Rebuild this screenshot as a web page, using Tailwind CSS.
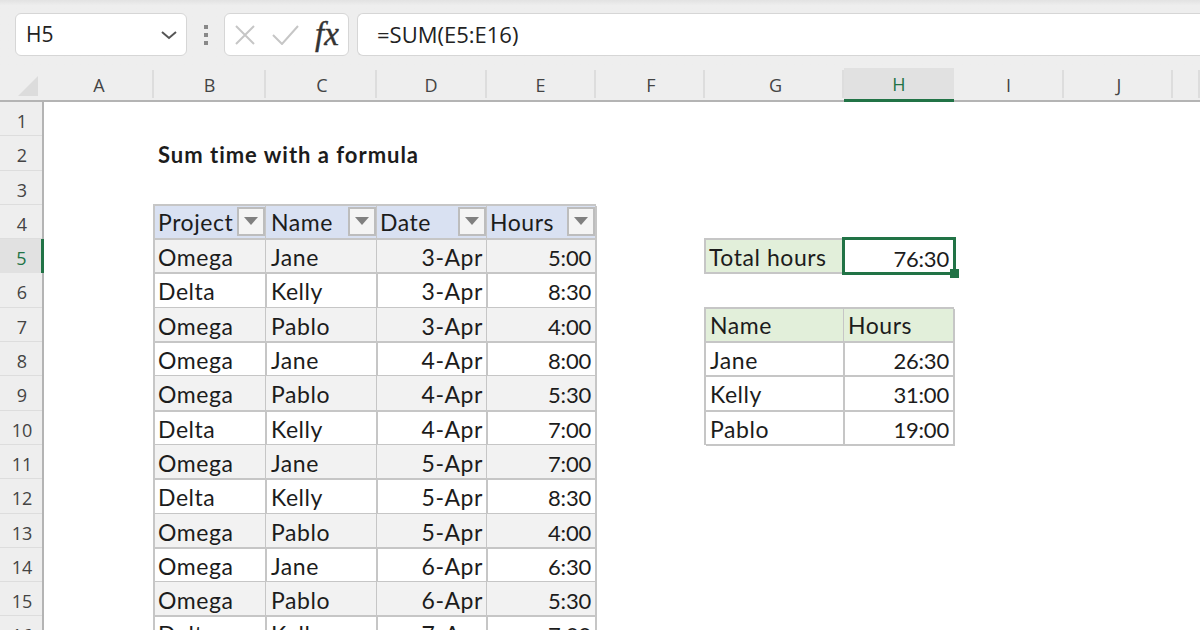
<!DOCTYPE html>
<html><head><meta charset="utf-8"><script src="https://cdn.jsdelivr.net/npm/@tailwindcss/browser@4"></script></head>
<body class="w-[1200px] h-[630px] overflow-hidden bg-white">
<div class="h-[68px] bg-[#eeeeee] relative flex items-start pt-[13px] bg-gradient-to-b from-[#e2e2e2] to-[#eeeeee] to-[8%] font-['Open_Sans',sans-serif] text-[#222]">
  <div class="ml-[15px] w-[172px] h-[43px] bg-white rounded-[6px] border border-[#d6d6d6] flex items-center justify-between pl-[10px] pr-[8px] text-[21px]">
    <span>H5</span>
    <svg width="18" height="18" viewBox="0 0 18 18"><path d="M2 6l7 6 7-6" fill="none" stroke="#555" stroke-width="2"/></svg>
  </div>
  <div class="w-[37px] h-[43px] flex flex-col items-center justify-center gap-[4px]">
    <i class="block w-[4px] h-[4px] bg-[#888]"></i><i class="block w-[4px] h-[4px] bg-[#888]"></i><i class="block w-[4px] h-[4px] bg-[#888]"></i>
  </div>
  <div class="w-[125px] h-[43px] bg-white rounded-[6px] border border-[#d6d6d6] flex items-center pl-[10px] gap-[17px]">
    <svg width="20" height="20" viewBox="0 0 20 20"><path d="M1 1l18 18M19 1L1 19" fill="none" stroke="#c6c6c6" stroke-width="2"/></svg>
    <svg width="27" height="20" viewBox="0 0 27 20"><path d="M1 10l9 9L26 1" fill="none" stroke="#c6c6c6" stroke-width="2"/></svg>
    <span class="ml-[-1px] font-['Liberation_Serif',serif] italic text-[33px] leading-none text-[#333] [-webkit-text-stroke:0.4px_#333]">fx</span>
  </div>
  <div class="ml-[8px] flex-1 h-[43px] bg-white rounded-l-[6px] border border-r-0 border-[#d6d6d6] flex items-center pl-[19px] text-[22px]">=SUM(E5:E16)</div>
</div>
<div class="h-[34px] bg-[#eeeeee] border-b-2 border-[#b4b4b4] grid grid-cols-[44px_110px_112px_111px_110px_109px_109px_139px_110px_110px_109px_27px] grid-rows-[32px] font-['Open_Sans',sans-serif] text-[18px] text-[#444] text-center">
  <div class="relative"><svg class="absolute left-[18px] top-[8px]" width="20" height="20" viewBox="0 0 20 20"><path d="M20 0V20H0Z" fill="#dcdcdc"/></svg></div>
  <div class="border-r-2 border-[#dddddd] my-[2px] leading-[30px] pl-[2px]">A</div>
  <div class="border-r-2 border-[#dddddd] my-[2px] leading-[30px] pl-[1px]">B</div>
  <div class="border-r-2 border-[#dddddd] my-[2px] leading-[30px] pl-[3px]">C</div>
  <div class="border-r-2 border-[#dddddd] my-[2px] leading-[30px]">D</div>
  <div class="border-r-2 border-[#dddddd] my-[2px] leading-[30px]">E</div>
  <div class="border-r-2 border-[#dddddd] my-[2px] leading-[30px] pl-[3px]">F</div>
  <div class="border-r-2 border-[#dddddd] my-[2px] leading-[30px] pl-[4px]">G</div>
  <div class="bg-[#e1e1e1] border-b-[3px] border-[#217346] -mb-[2px] text-[#217346] leading-[33px]">H</div>
  <div class="border-r-2 border-[#dddddd] my-[2px] leading-[30px] pl-[1px]">I</div>
  <div class="border-r-2 border-[#dddddd] my-[2px] leading-[30px] pl-[3px]">J</div>
  <div class="border-r-2 border-[#dddddd] my-[2px]"></div>
  <div></div>
</div>
<div class="flex">
  <div class="w-[44px] shrink-0 bg-[#eeeeee] border-r-2 border-[#b4b4b4] grid grid-rows-[repeat(16,34.3px)] font-['Open_Sans',sans-serif] text-[18px] text-[#444] text-center leading-[33px] [&>div]:pt-[3px] [&>div]:pl-[2px]">
    <div class="border-b border-[#dddddd]">1</div><div class="border-b border-[#dddddd]">2</div><div class="border-b border-[#dddddd]">3</div><div class="border-b border-[#dddddd]">4</div>
    <div class="bg-[#e1e1e1] text-[#217346] -mr-[2px] border-r-[3px] border-[#217346]">5</div>
    <div class="border-b border-[#dddddd]">6</div><div class="border-b border-[#dddddd]">7</div><div class="border-b border-[#dddddd]">8</div><div class="border-b border-[#dddddd]">9</div><div class="border-b border-[#dddddd]">10</div><div class="border-b border-[#dddddd]">11</div><div class="border-b border-[#dddddd]">12</div><div class="border-b border-[#dddddd]">13</div><div class="border-b border-[#dddddd]">14</div><div class="border-b border-[#dddddd]">15</div><div class="border-b border-[#dddddd]">16</div>
  </div>
  <div class="relative grid grid-cols-[110px_112px_111px_110px_109px_109px_139px_110px_110px] grid-rows-[repeat(16,34.3px)] font-['Lato',sans-serif] text-[23px] tracking-[0.55px] leading-[33px] text-[#1c1c1c] [&_div]:whitespace-nowrap">
    <div class="col-start-2 col-span-3 row-start-2 font-bold text-[22px] tracking-[0.98px] pl-[4px] pt-[2px]">Sum time with a formula</div>

    <div class="col-start-2 col-end-6 row-start-4 row-end-17 grid grid-cols-subgrid grid-rows-subgrid border-l-2 border-t-2 border-[#c6c6c6] -ml-[1px] -mt-[1px] [&>div]:border-r-2 [&>div]:border-b-2 [&>div]:border-[#c6c6c6] [&>div]:-mr-[1px] [&>div]:-mb-[1px] [&>div]:pl-[3px] [&>div]:pr-[3px] [&>div:nth-child(4n+2)]:pl-[5px] [&>div:nth-child(4n)]:pr-[4px]">
      <div class="bg-[#d9e1f2] relative">Project<span class="absolute right-0 top-[1px] w-[28px] h-[29px] bg-[#f4f4f4] border-2 border-[#bdbdbd] flex items-center justify-center"><svg width="14" height="8" viewBox="0 0 14 8"><path d="M0 0H14L7 8Z" fill="#808080"/></svg></span></div>
      <div class="bg-[#d9e1f2] relative">Name<span class="absolute right-0 top-[1px] w-[28px] h-[29px] bg-[#f4f4f4] border-2 border-[#bdbdbd] flex items-center justify-center"><svg width="14" height="8" viewBox="0 0 14 8"><path d="M0 0H14L7 8Z" fill="#808080"/></svg></span></div>
      <div class="bg-[#d9e1f2] relative">Date<span class="absolute right-0 top-[1px] w-[28px] h-[29px] bg-[#f4f4f4] border-2 border-[#bdbdbd] flex items-center justify-center"><svg width="14" height="8" viewBox="0 0 14 8"><path d="M0 0H14L7 8Z" fill="#808080"/></svg></span></div>
      <div class="bg-[#d9e1f2] relative">Hours<span class="absolute right-0 top-[1px] w-[28px] h-[29px] bg-[#f4f4f4] border-2 border-[#bdbdbd] flex items-center justify-center"><svg width="14" height="8" viewBox="0 0 14 8"><path d="M0 0H14L7 8Z" fill="#808080"/></svg></span></div>

      <div class="pt-[2px] bg-[#f2f2f2]">Omega</div><div class="pt-[2px] bg-[#f2f2f2]">Jane</div><div class="pt-[2px] bg-[#f2f2f2] text-right">3-Apr</div><div class="pt-[2px] bg-[#f2f2f2] text-right text-[22px] tracking-[-0.2px]">5:00</div>
      <div class="pt-[2px]">Delta</div><div class="pt-[2px]">Kelly</div><div class="pt-[2px] text-right">3-Apr</div><div class="pt-[2px] text-right text-[22px] tracking-[-0.2px]">8:30</div>
      <div class="pt-[2px] bg-[#f2f2f2]">Omega</div><div class="pt-[2px] bg-[#f2f2f2]">Pablo</div><div class="pt-[2px] bg-[#f2f2f2] text-right">3-Apr</div><div class="pt-[2px] bg-[#f2f2f2] text-right text-[22px] tracking-[-0.2px]">4:00</div>
      <div class="pt-[2px]">Omega</div><div class="pt-[2px]">Jane</div><div class="pt-[2px] text-right">4-Apr</div><div class="pt-[2px] text-right text-[22px] tracking-[-0.2px]">8:00</div>
      <div class="pt-[2px] bg-[#f2f2f2]">Omega</div><div class="pt-[2px] bg-[#f2f2f2]">Pablo</div><div class="pt-[2px] bg-[#f2f2f2] text-right">4-Apr</div><div class="pt-[2px] bg-[#f2f2f2] text-right text-[22px] tracking-[-0.2px]">5:30</div>
      <div class="pt-[2px]">Delta</div><div class="pt-[2px]">Kelly</div><div class="pt-[2px] text-right">4-Apr</div><div class="pt-[2px] text-right text-[22px] tracking-[-0.2px]">7:00</div>
      <div class="pt-[2px] bg-[#f2f2f2]">Omega</div><div class="pt-[2px] bg-[#f2f2f2]">Jane</div><div class="pt-[2px] bg-[#f2f2f2] text-right">5-Apr</div><div class="pt-[2px] bg-[#f2f2f2] text-right text-[22px] tracking-[-0.2px]">7:00</div>
      <div class="pt-[2px]">Delta</div><div class="pt-[2px]">Kelly</div><div class="pt-[2px] text-right">5-Apr</div><div class="pt-[2px] text-right text-[22px] tracking-[-0.2px]">8:30</div>
      <div class="pt-[2px] bg-[#f2f2f2]">Omega</div><div class="pt-[2px] bg-[#f2f2f2]">Pablo</div><div class="pt-[2px] bg-[#f2f2f2] text-right">5-Apr</div><div class="pt-[2px] bg-[#f2f2f2] text-right text-[22px] tracking-[-0.2px]">4:00</div>
      <div class="pt-[2px]">Omega</div><div class="pt-[2px]">Jane</div><div class="pt-[2px] text-right">6-Apr</div><div class="pt-[2px] text-right text-[22px] tracking-[-0.2px]">6:30</div>
      <div class="pt-[2px] bg-[#f2f2f2]">Omega</div><div class="pt-[2px] bg-[#f2f2f2]">Pablo</div><div class="pt-[2px] bg-[#f2f2f2] text-right">6-Apr</div><div class="pt-[2px] bg-[#f2f2f2] text-right text-[22px] tracking-[-0.2px]">5:30</div>
      <div class="pt-[2px]">Delta</div><div class="pt-[2px]">Kelly</div><div class="pt-[2px] text-right">7-Apr</div><div class="pt-[2px] text-right text-[22px] tracking-[-0.2px]">7:00</div>
    </div>

    <div class="col-start-7 row-start-5 bg-[#e2efda] border-2 border-[#c6c6c6] -ml-[1px] -mt-[1px] -mb-[1px] pl-[3px] pt-[2px] leading-[31px]">Total hours</div>
    <div class="col-start-8 row-start-5 relative z-10 -m-[2px] border-[3px] border-[#217346] bg-white text-right pr-[4px] pt-[2px] leading-[33px] text-[22px] tracking-[-0.2px]">76:30<i class="absolute right-[-6px] bottom-[-6px] w-[9px] h-[9px] bg-[#217346]"></i></div>

    <div class="col-start-7 col-end-9 row-start-7 row-end-11 grid grid-cols-subgrid grid-rows-subgrid border-l-2 border-t-2 border-[#c6c6c6] -ml-[1px] -mt-[1px] [&>div]:border-r-2 [&>div]:border-b-2 [&>div]:border-[#c6c6c6] [&>div]:-mr-[1px] [&>div]:-mb-[1px] [&>div]:pl-[4px] [&>div]:pr-[4px]">
      <div class="bg-[#e2efda]">Name</div><div class="bg-[#e2efda]">Hours</div>
      <div class="pt-[2px]">Jane</div><div class="pt-[2px] text-right text-[22px] tracking-[-0.2px]">26:30</div>
      <div class="pt-[2px]">Kelly</div><div class="pt-[2px] text-right text-[22px] tracking-[-0.2px]">31:00</div>
      <div class="pt-[2px]">Pablo</div><div class="pt-[2px] text-right text-[22px] tracking-[-0.2px]">19:00</div>
    </div>
  </div>
</div>
</body></html>
